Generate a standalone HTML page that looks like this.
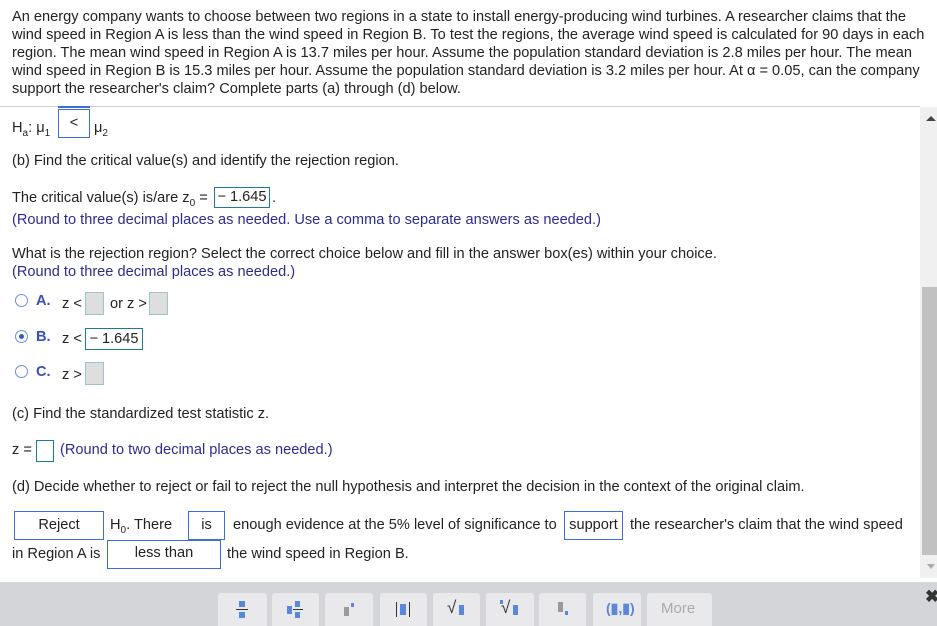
<!DOCTYPE html>
<html><head><meta charset="utf-8"><style>
body{margin:0;width:937px;height:626px;position:relative;overflow:hidden;background:#fff;font-family:"Liberation Sans",Arial,sans-serif;font-size:14.6px;color:#222;}
.a{position:absolute;white-space:nowrap;line-height:18px;}
.bl{color:#2b2b95;}
.box{position:absolute;box-sizing:border-box;border:1px solid #1e7a98;background:#fff;text-align:center;line-height:18px;}
.bb{position:absolute;box-sizing:border-box;border:1px solid #3b6fd6;background:#fff;text-align:center;}
.g{position:absolute;box-sizing:border-box;border:1px solid #9bc3cc;background:#dedede;}
.r{position:absolute;width:13px;height:13px;border:1.5px solid #6c8fd8;border-radius:50%;box-sizing:border-box;}
.lt{position:absolute;font-weight:bold;color:#3a4fb5;line-height:18px;}
.btn{position:absolute;top:593px;height:33px;background:#e9e9eb;border-radius:3px 3px 0 0;}
sub{font-size:10px;}
</style></head><body>
<div class="a" style="left:12px;top:8px">An energy company wants to choose between two regions in a state to install energy-producing wind turbines. A researcher claims that the</div>
<div class="a" style="left:12px;top:26px">wind speed in Region A is less than the wind speed in Region B. To test the regions, the average wind speed is calculated for 90 days in each</div>
<div class="a" style="left:12px;top:44px">region. The mean wind speed in Region A is 13.7 miles per hour. Assume the population standard deviation is 2.8 miles per hour. The mean</div>
<div class="a" style="left:12px;top:62px">wind speed in Region B is 15.3 miles per hour. Assume the population standard deviation is 3.2 miles per hour. At α = 0.05, can the company</div>
<div class="a" style="left:12px;top:80px">support the researcher's claim? Complete parts (a) through (d) below.</div>
<div style="position:absolute;left:0;top:106px;width:920px;height:1px;background:#d0d0d8"></div>
<div style="position:absolute;left:58px;top:106px;width:32px;height:2px;background:#3b6fd6"></div>

<div class="a" style="left:12px;top:119px">H<sub>a</sub>: μ<sub>1</sub></div>
<div class="bb" style="left:58px;top:109px;width:32px;height:29px;line-height:26px">&lt;</div>
<div class="a" style="left:94px;top:119px">μ<sub>2</sub></div>

<div class="a" style="left:12px;top:152px">(b) Find the critical value(s) and identify the rejection region.</div>
<div class="a" style="left:12px;top:189px">The critical value(s) is/are z<sub>0</sub> =</div>
<div class="box" style="left:214px;top:187px;width:56px;height:21px">− 1.645</div>
<div class="a" style="left:272px;top:189px">.</div>
<div class="a bl" style="left:12px;top:211px">(Round to three decimal places as needed. Use a comma to separate answers as needed.)</div>
<div class="a" style="left:12px;top:245px">What is the rejection region? Select the correct choice below and fill in the answer box(es) within your choice.</div>
<div class="a bl" style="left:12px;top:263px">(Round to three decimal places as needed.)</div>

<div class="r" style="left:15px;top:294px"></div><div class="lt" style="left:36px;top:292px">A.</div>
<div class="a" style="left:62px;top:295px">z &lt;</div><div class="g" style="left:85px;top:292px;width:19px;height:23px"></div>
<div class="a" style="left:110px;top:295px">or z &gt;</div><div class="g" style="left:149px;top:292px;width:19px;height:23px"></div>

<div class="r" style="left:15px;top:330px"></div><div style="position:absolute;left:19px;top:334px;width:5px;height:5px;border-radius:50%;background:#2d5bd6"></div>
<div class="lt" style="left:36px;top:328px">B.</div>
<div class="a" style="left:62px;top:330px">z &lt;</div><div class="box" style="left:85px;top:328px;width:58px;height:22px;line-height:20px">− 1.645</div>

<div class="r" style="left:15px;top:365px"></div><div class="lt" style="left:36px;top:363px">C.</div>
<div class="a" style="left:62px;top:366px">z &gt;</div><div class="g" style="left:85px;top:362px;width:19px;height:23px"></div>

<div class="a" style="left:12px;top:405px">(c) Find the standardized test statistic z.</div>
<div class="a" style="left:12px;top:441px">z =</div><div class="box" style="left:36px;top:440px;width:18px;height:22px"></div>
<div class="a bl" style="left:60px;top:441px">(Round to two decimal places as needed.)</div>
<div class="a" style="left:12px;top:478px">(d) Decide whether to reject or fail to reject the null hypothesis and interpret the decision in the context of the original claim.</div>

<div class="bb" style="left:14px;top:511px;width:90px;height:29px;line-height:27px">Reject</div>
<div class="a" style="left:110px;top:516px">H<sub>0</sub>. There</div>
<div class="bb" style="left:188px;top:511px;width:37px;height:29px;line-height:27px">is</div>
<div class="a" style="left:233px;top:516px">enough evidence at the 5% level of significance to</div>
<div class="bb" style="left:564px;top:511px;width:59px;height:29px;line-height:27px">support</div>
<div class="a" style="left:630px;top:516px">the researcher's claim that the wind speed</div>
<div class="a" style="left:12px;top:545px">in Region A is</div>
<div class="bb" style="left:107px;top:540px;width:114px;height:29px;line-height:25px">less than</div>
<div class="a" style="left:227px;top:545px">the wind speed in Region B.</div>

<div style="position:absolute;left:920px;top:107px;width:17px;height:471px;background:#f0f0f0"></div>
<div style="position:absolute;left:922px;top:287px;width:15px;height:268px;background:#c1c1c1"></div>
<div style="position:absolute;left:926px;top:116px;width:0;height:0;border-left:5px solid transparent;border-right:5px solid transparent;border-bottom:5px solid #444"></div>
<div style="position:absolute;left:927px;top:564px;width:0;height:0;border-left:4px solid transparent;border-right:4px solid transparent;border-top:5px solid #aaa"></div>

<div style="position:absolute;left:0;top:582px;width:937px;height:44px;background:#d4d5d9"></div>
<div class="btn" style="left:218px;width:49px"><div style="position:absolute;left:21px;top:8px;width:6px;height:6px;background:#5b87d8"></div><div style="position:absolute;left:18px;top:16px;width:12px;height:1px;background:#333"></div><div style="position:absolute;left:21px;top:19px;width:6px;height:6px;background:#5b87d8"></div></div>
<div class="btn" style="left:272px;width:47px"><div style="position:absolute;left:15px;top:13px;width:5px;height:8px;background:#5b87d8"></div><div style="position:absolute;left:23px;top:8px;width:5px;height:6px;background:#5b87d8"></div><div style="position:absolute;left:21px;top:16px;width:10px;height:1px;background:#333"></div><div style="position:absolute;left:23px;top:19px;width:5px;height:6px;background:#5b87d8"></div></div>
<div class="btn" style="left:325px;width:48px"><div style="position:absolute;left:19px;top:14px;width:5px;height:9px;background:#999"></div><div style="position:absolute;left:26px;top:10px;width:3px;height:4px;background:#5b87d8"></div></div>
<div class="btn" style="left:380px;width:47px"><div style="position:absolute;left:16px;top:9px;width:1px;height:15px;background:#333"></div><div style="position:absolute;left:20px;top:11px;width:6px;height:11px;background:#5b87d8"></div><div style="position:absolute;left:29px;top:9px;width:1px;height:15px;background:#333"></div></div>
<div class="btn" style="left:433px;width:47px"><span style="position:absolute;left:14px;top:5px;font-size:17px;color:#333">√</span><div style="position:absolute;left:26px;top:12px;width:5px;height:10px;background:#5b87d8"></div></div>
<div class="btn" style="left:486px;width:48px"><div style="position:absolute;left:14px;top:7px;width:3px;height:4px;background:#5b87d8"></div><span style="position:absolute;left:15px;top:5px;font-size:17px;color:#333">√</span><div style="position:absolute;left:27px;top:12px;width:5px;height:10px;background:#5b87d8"></div></div>
<div class="btn" style="left:539px;width:47px"><div style="position:absolute;left:19px;top:9px;width:5px;height:10px;background:#999"></div><div style="position:absolute;left:26px;top:18px;width:3px;height:4px;background:#5b87d8"></div></div>
<div class="btn" style="left:593px;width:48px"><span style="position:absolute;left:13px;top:7px;font-size:14px;color:#5b87d8;font-weight:bold">(▮,▮)</span></div>
<div class="btn" style="left:647px;width:65px"><span style="position:absolute;left:14px;top:7px;font-size:15px;color:#aaa">More</span></div>
<div style="position:absolute;left:925px;top:587px;font-size:17px;font-weight:bold;color:#333">✖</div>
</body></html>
